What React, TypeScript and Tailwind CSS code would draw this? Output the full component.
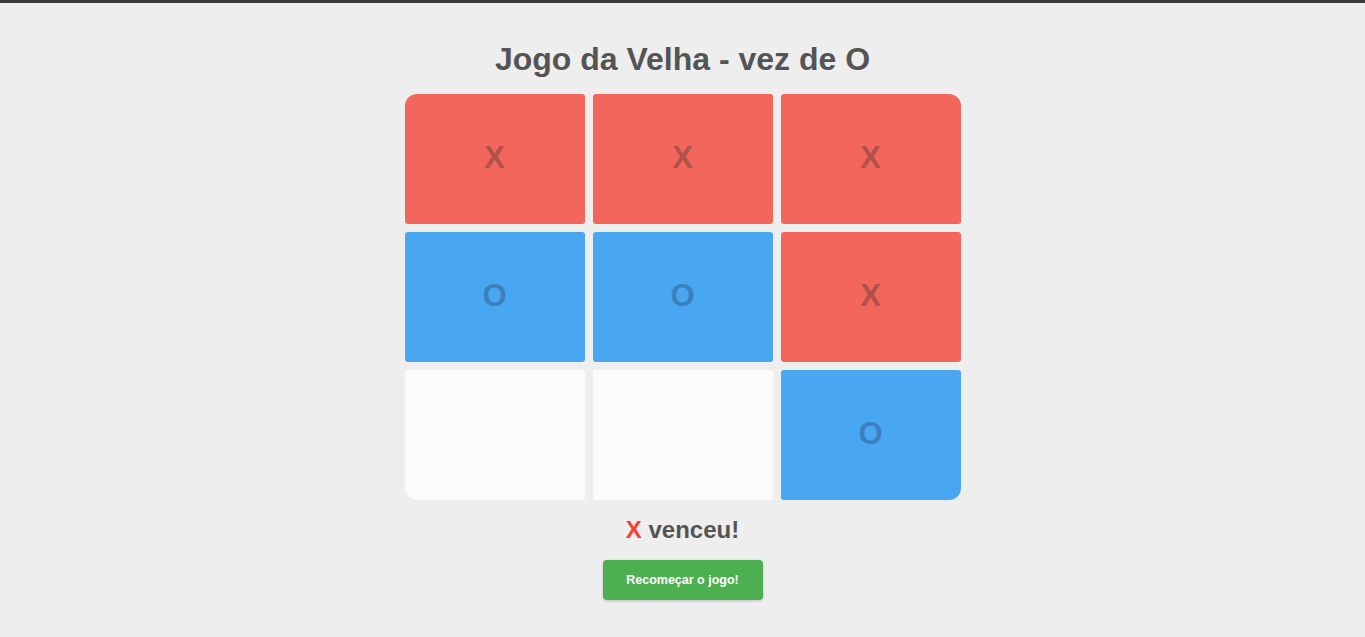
import React from "react";

type Cell = "X" | "O" | "";

const board: Cell[] = ["X", "X", "X", "O", "O", "X", "", "", "O"];

const corner = [
  "rounded-tl-[12px]",
  "",
  "rounded-tr-[12px]",
  "",
  "",
  "",
  "rounded-bl-[12px]",
  "",
  "rounded-br-[12px]",
];

export default function App() {
  return (
    <div
      className="min-h-[637px] w-full bg-[#eeeeee] border-t-[3px] border-[#3c3c3c] flex flex-col items-center"
      style={{ fontFamily: '"Liberation Sans", Arial, sans-serif' }}
    >
      <h1 className="mt-[38px] text-[32px] leading-[37px] font-bold text-[#545454]">
        Jogo da Velha - vez de O
      </h1>
      <div className="mt-[16px] grid grid-cols-[180px_180px_180px] grid-rows-[130px_130px_130px] gap-[8px]">
        {board.map((c, i) => {
          const bg =
            c === "X" ? "bg-[#f2665c]" : c === "O" ? "bg-[#49a6f1]" : "bg-[#fbfbfb]";
          const fg = c === "X" ? "text-[#b0524b]" : "text-[#3a80bd]";
          return (
            <div
              key={i}
              className={`${bg} ${corner[i]} rounded-[3px] flex items-center justify-center pb-[2px] text-[31px] font-bold ${fg}`}
            >
              {c}
            </div>
          );
        })}
      </div>
      <div className="mt-[16px] text-[24px] leading-[28px] font-bold text-[#545454]">
        <span className="text-[#f44336]">X</span> venceu!
      </div>
      <button className="mt-[16px] w-[160px] h-[40px] bg-[#4caf50] rounded-[4px] text-white text-[12.5px] font-bold shadow-[0_1px_3px_rgba(0,0,0,0.2)]">
        Recomeçar o jogo!
      </button>
    </div>
  );
}
